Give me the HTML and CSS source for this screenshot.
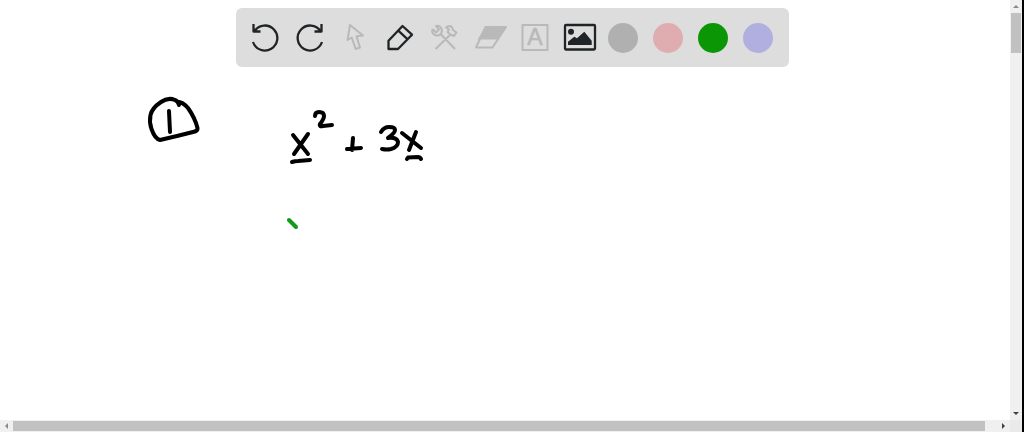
FILE: index.html
```html
<!DOCTYPE html>
<html lang="en">
<head>
    <meta charset="UTF-8">
    <meta name="viewport" content="width=device-width, initial-scale=1.0">
    <title>Whiteboard</title>
    <link rel="stylesheet" href="styles.css">
</head>
<body>

    <!-- Drawing area -->
    <main class="board">
        <svg class="ink" role="img" aria-label="1) x² + 3x">
            <!-- Circled problem number -->
            <path d="M179 105Q178 101 175 100Q168 97 161 102Q152 108 150.500 115Q149 122 151.500 129Q155 139 160 140L177 136L193 132Q198 131 197.500 128Q195 118 188 108Q183 102 177 101.500"/>
            <path d="M169 111L170 132"/>
            <!-- First term -->
            <path d="M293 135L308 154M308 134L294 154M292 162Q295 161 298 161L310 160"/>
            <path d="M315 116Q315 112 319 112Q324 112 324 116Q324 119 320 124Q319 127 323 126L332 125"/>
            <path d="M353 138L352 150M347 149L361 148"/>
            <!-- Second term -->
            <path d="M381 132Q384 127 389 127Q395 127 395 130Q395 133 388 138Q397 137 398 142Q398 147 391 149Q387 150 382 149"/>
            <path d="M402 133L421 148M416 132L409 150M407 159L408 157.500L418 157Q420 157 421 159"/>
            <!-- Stroke in progress -->
            <path class="ink-green" d="M289 220L296 227"/>
        </svg>
    </main>

    <!-- Scrollbars -->
    <div class="scrollbar vertical">
        <button class="arrow" aria-label="Scroll up"><svg viewBox="0 0 12 12"><path d="M3 8L6 5L9 8Z"/></svg></button>
        <div class="track"><div class="thumb"></div></div>
        <button class="arrow" aria-label="Scroll down"><svg viewBox="0 0 12 12"><path class="dark" d="M3 4L6 7L9 4Z"/></svg></button>
    </div>
    <div class="scrollbar horizontal">
        <button class="arrow" aria-label="Scroll left"><svg viewBox="0 0 12 12"><path d="M8 3L5 6L8 9Z"/></svg></button>
        <div class="track"><div class="thumb"></div></div>
        <button class="arrow" aria-label="Scroll right"><svg viewBox="0 0 12 12"><path class="dark" d="M4 3L7 6L4 9Z"/></svg></button>
    </div>
    <div class="corner"></div>

    <!-- Floating toolbar -->
    <div class="toolbar-layer">
        <div class="toolbar" role="toolbar" aria-label="Drawing tools">
            <button class="tool" aria-label="Undo">
                <svg viewBox="0 0 35 35"><path d="M5 22A12.500 12.500 0 1 0 6.500 11M5.500 4V11.500H12.500"/></svg>
            </button>
            <button class="tool" aria-label="Redo">
                <svg viewBox="0 0 35 35"><path d="M29 22A12.500 12.500 0 1 1 27.500 11M28.500 4V11.500H21.500"/></svg>
            </button>
            <button class="tool muted" aria-label="Select">
                <svg viewBox="0 0 35 35"><path d="M12 5L9.500 20L13.700 17.500L17.700 29L22 27.500L18.500 16.200L25 15.500Z"/></svg>
            </button>
            <button class="tool" aria-label="Pen">
                <svg viewBox="0 0 35 35"><path d="M5.500 29V20.700L19.500 6L29 14.700L15 29ZM15.300 10.700L24.700 19.300"/></svg>
            </button>
            <button class="tool muted" aria-label="Tools">
                <svg viewBox="0 0 35 35"><path d="M13 14.500L27 29M7.500 29L22.500 14.500M4.500 9C3 13 7 17 11.500 15L13.500 13C15 9 12 5 8 6L11 9.500L8 12.500L4.500 9M18 7.500Q21 5 24 7L25 10L28.500 12.500L26 16L22.500 14.500L19.500 12L21 9.500Z"/></svg>
            </button>
            <button class="tool muted" aria-label="Eraser">
                <svg viewBox="0 0 35 35"><path d="M12.500 7H33L19.500 27.500H3Z"/><path class="fill" d="M12.500 7H33L25 19.500H4.500Z"/></svg>
            </button>
            <button class="tool muted" aria-label="Text">
                <svg viewBox="0 0 35 35"><rect x="4.500" y="5" width="25" height="25"/><text x="17" y="25" text-anchor="middle">A</text></svg>
            </button>
            <button class="tool" aria-label="Image">
                <svg viewBox="0 0 35 35"><rect x="3" y="5" width="30" height="24.500" rx="1"/><circle class="fill" cx="9" cy="11.700" r="3"/><path class="fill" d="M6 25V21.700L12.300 16.700L15 18.300L22.300 11.700L29.700 20.700V25Z"/></svg>
            </button>
            <button class="swatch gray" aria-label="Gray"></button>
            <button class="swatch pink" aria-label="Pink"></button>
            <button class="swatch green" aria-label="Green"></button>
            <button class="swatch violet" aria-label="Violet"></button>
        </div>
    </div>

</body>
</html>
```

FILE: styles.css
```css
* {
    margin: 0;
    padding: 0;
    box-sizing: border-box;
}

body {
    font-family: "Liberation Sans", Arial, sans-serif;
    display: grid;
    grid-template-columns: 1fr 12px;
    grid-template-rows: 1fr 12px;
    height: 100vh;
    overflow: hidden;
    background-color: #ffffff;
    border-right: 2px solid #000000;
}

button {
    border: none;
    background: none;
    cursor: pointer;
}

/* Drawing area */
.board {
    min-width: 0;
    min-height: 0;
}

.ink {
    display: block;
    width: 100%;
    height: 100%;
    fill: none;
    stroke: #000000;
    stroke-width: 4;
    stroke-linecap: round;
    stroke-linejoin: round;
}

.ink-green {
    stroke: #129a1a;
}

/* Toolbar */
.toolbar-layer {
    position: absolute;
    top: 8px;
    left: 0;
    right: 0;
    display: flex;
    justify-content: center;
    pointer-events: none;
}

.toolbar {
    display: grid;
    grid-template-columns: repeat(7, 45px) 43px repeat(4, 45px);
    align-items: center;
    justify-items: center;
    padding: 7px 8px 7px 7px;
    background-color: #dddddd;
    border-radius: 6px;
    pointer-events: auto;
}

.tool {
    width: 45px;
    height: 45px;
    padding: 5px;
    color: #202426;
}

.tool.muted {
    color: #b9b9b9;
}

.tool svg {
    display: block;
    width: 35px;
    height: 35px;
    fill: none;
    stroke: currentColor;
    stroke-width: 2.3;
    stroke-linejoin: round;
}

.tool.muted svg {
    stroke-width: 2;
}

.tool .fill {
    fill: currentColor;
    stroke: none;
}

.tool text {
    fill: currentColor;
    stroke-width: 0.6;
    font-size: 23px;
}

.swatch {
    width: 30px;
    height: 30px;
    border-radius: 50%;
}

.gray {
    background-color: #b0b0b0;
}

.pink {
    background-color: #dfadb0;
}

.green {
    background-color: #0b9705;
}

.violet {
    background-color: #b1afe0;
}

/* Scrollbars */
.scrollbar {
    display: flex;
    background-color: #f0f0f0;
}

.vertical {
    flex-direction: column;
}

.arrow {
    width: 12px;
    height: 12px;
}

.arrow svg {
    display: block;
    fill: #8a8a8a;
}

.arrow .dark {
    fill: #404040;
}

.track {
    flex: 1;
}

.thumb {
    background-color: #c1c1c1;
}

.vertical .thumb {
    height: 10%;
    margin: 1px 1px 0;
}

.horizontal .thumb {
    height: 10px;
    margin: 1px 13px 1px 1px;
}

.corner {
    background-color: #eaeaea;
}
```
